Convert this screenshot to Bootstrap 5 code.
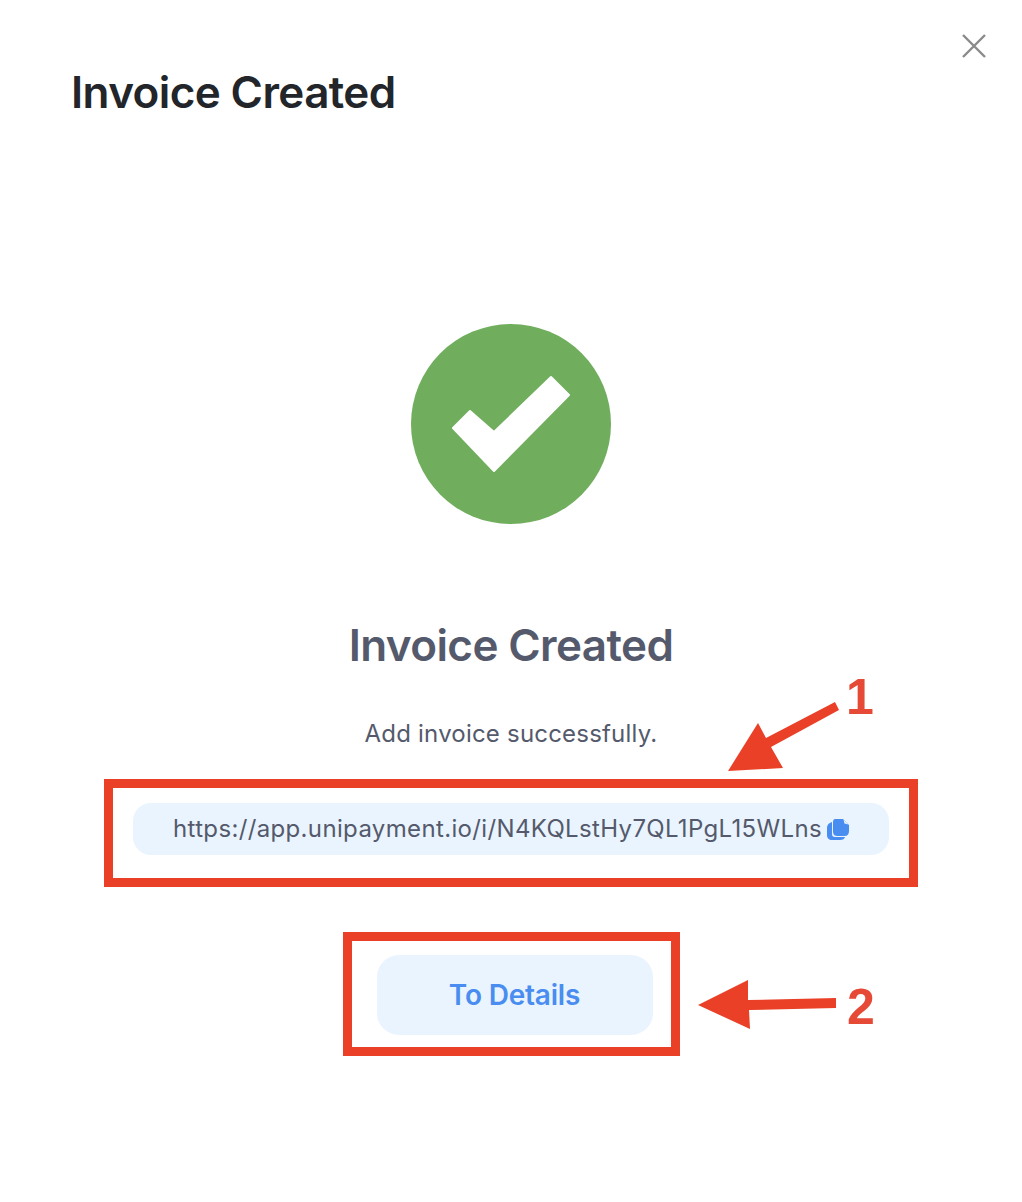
<!DOCTYPE html>
<html lang="en">
<head>
<meta charset="utf-8">
<title>Invoice Created</title>
<link href="https://cdn.jsdelivr.net/npm/bootstrap@5.3.0/dist/css/bootstrap.min.css" rel="stylesheet">
<style>
html,body{height:100%;background:#fff;overflow:hidden}
body{font-family:Inter,"Liberation Sans",sans-serif;position:relative}
.sheet{width:1022px;height:1202px;position:relative}
.sheet-head{padding:62px 0 0 71px;height:324px}
.sheet-title{font-size:44px;line-height:60px;font-weight:600;color:#222529;margin:0;letter-spacing:-.6px}
.close-x{position:absolute;left:962px;top:32px;width:24px;height:24px;display:block;border:0;background:none;padding:0}
.tick{width:200px;height:200px;display:block}
.body-title{font-size:44px;line-height:60px;font-weight:600;color:#545a6c;margin:91px 0 0;letter-spacing:-.6px}
.body-msg{font-size:24px;line-height:36px;color:#545a6c;margin:41px 0 0;letter-spacing:.2px}
.frame-a{width:814px;height:108px;margin-top:27px;border:9px solid #e94027;padding:15px 20px}
.url-pill{height:52px;background:#eaf4fe;border-radius:18px;padding:0 40px;color:#545a6c;font-size:24px;letter-spacing:.35px}
.copy-ico{width:26px;height:26px;display:block;margin-right:-2px}
.frame-b{width:337px;height:124px;margin-top:45px;border:9px solid #e94027;padding:14px 25px}
.go-btn{width:276px;height:80px;background:#eaf4fe;border:0;border-radius:22px;color:#4a8df0;font-size:28px;font-weight:600;letter-spacing:-.2px}
.go-btn:hover{background:#eaf4fe;color:#4a8df0}
.marks{position:absolute;left:0;top:0;width:1022px;height:1202px;pointer-events:none}
.step-no{position:absolute;font-family:"Liberation Sans",sans-serif;font-weight:700;font-size:50px;line-height:50px;color:#e64a36}
.step-one{left:846px;top:672px}
.step-two{left:847px;top:982px}
</style>
</head>
<body>
<div class="sheet">
  <div class="sheet-head"><h1 class="sheet-title">Invoice Created</h1></div>
  <button class="close-x" type="button" aria-label="Close">
    <svg width="24" height="24" viewBox="0 0 24 24"><path d="M1 1 L23 23 M23 1 L1 23" stroke="#8a8a8a" stroke-width="2.4" fill="none"/></svg>
  </button>
  <div class="d-flex flex-column align-items-center text-center">
    <svg class="tick" viewBox="0 0 200 200">
      <circle cx="100" cy="100" r="100" fill="#70ae5e"/>
      <path d="M42 104 L59 87 L83 108 L140 53 L158 71 L83 147 Z" fill="#fff" stroke="#fff" stroke-width="2" stroke-linejoin="round"/>
    </svg>
    <h2 class="body-title">Invoice Created</h2>
    <p class="body-msg">Add invoice successfully.</p>
    <div class="frame-a">
      <div class="url-pill d-flex align-items-center justify-content-between">
        <span>https://app.unipayment.io/i/N4KQLstHy7QL1PgL15WLns</span>
        <svg class="copy-ico" viewBox="0 0 26 26">
          <path d="M7 6 C3.5 7 2 9 2 12 V19 C2 22.500 4 24 7 24 H15 C18 24 19.500 23 20 21 H10 C8 21 7 20 7 18 Z" fill="#4a8df0"/>
          <path d="M10 3 H18 L24 9 V15 C24 18 22.500 20 19.500 20 H12.500 C9.500 20 8 18.500 8 15.500 V6 C8 4 9 3 10 3 Z" fill="#4a8df0"/>
          <path d="M18.500 3.500 L23.500 8.500 L19.500 7.500 Z" fill="#eaf4fe"/>
        </svg>
      </div>
    </div>
    <div class="frame-b">
      <button class="btn go-btn" type="button">To Details</button>
    </div>
  </div>
  <svg class="marks" viewBox="0 0 1022 1202">
    <path d="M839 710 L771 747 L783 768 L728 771 L758 723 L766 738 L835 702 Z" fill="#e94027"/>
    <path d="M836 998 L748 1000 L748 980 L698 1005 L750 1029 L749 1010 L836 1008 Z" fill="#e94027"/>
  </svg>
  <span class="step-no step-one">1</span>
  <span class="step-no step-two">2</span>
</div>
<script src="https://cdn.jsdelivr.net/npm/bootstrap@5.3.0/dist/js/bootstrap.bundle.min.js"></script>
</body>
</html>
